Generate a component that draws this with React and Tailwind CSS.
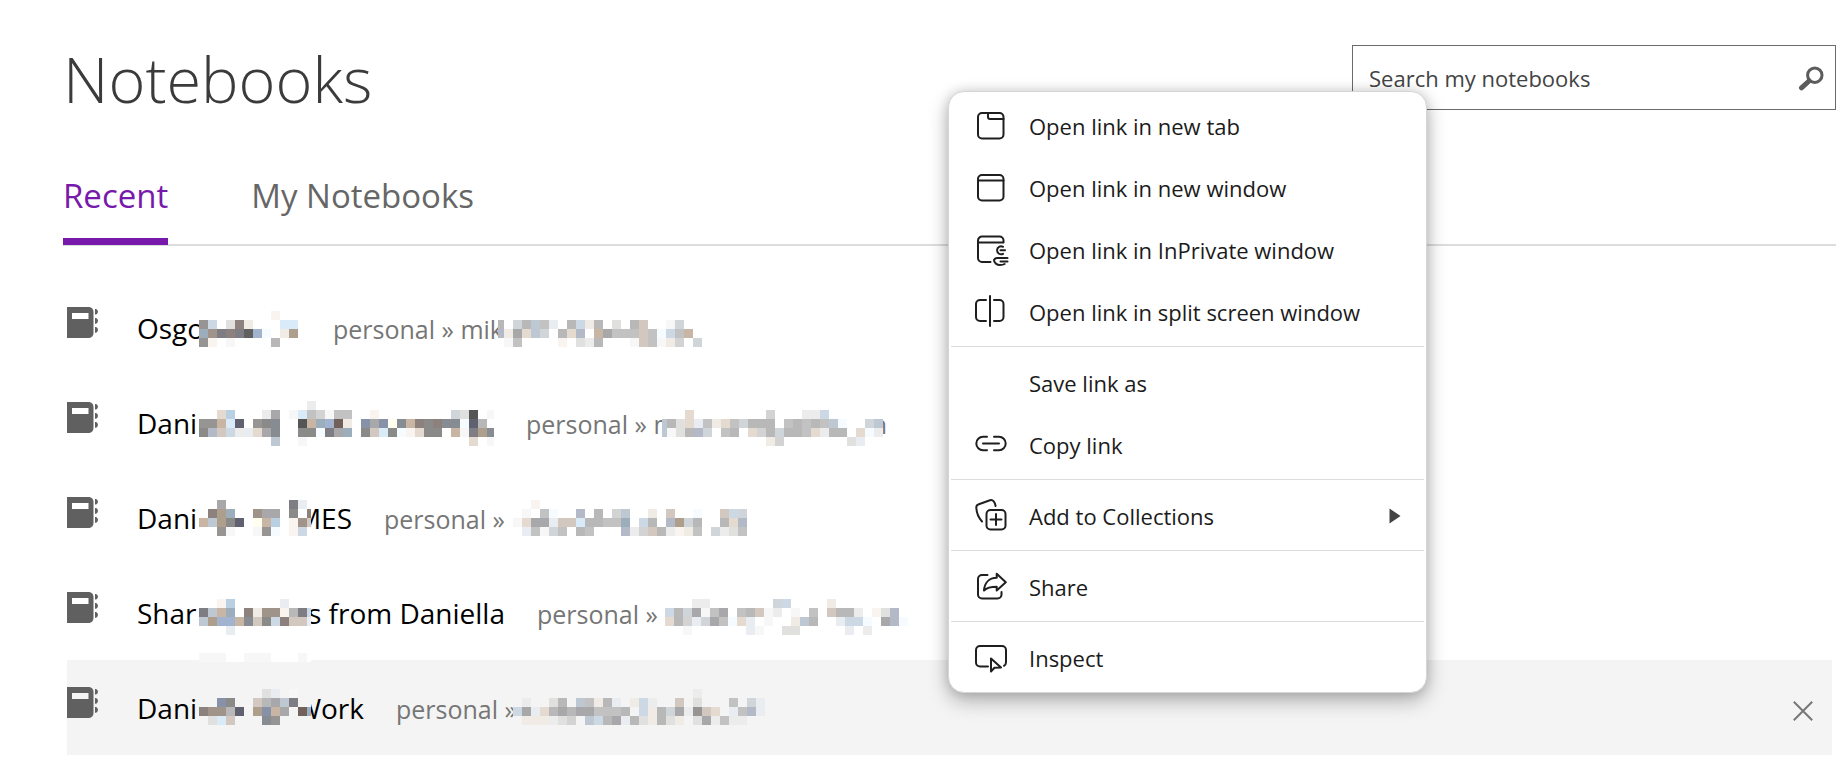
import React from "react";

const CELL = 9;
const ROW_HEIGHT = 95;

const PALETTE = {
  K: "#555555", a: "#606060", b: "#7d7d83", c: "#8a8a89", d: "#969594", e: "#a8a8aa",
  f: "#b8b8b8", g: "#c3c2c2", h: "#d3d3d3", i: "#e0e0df", j: "#ececec", k: "#f7f7f7", w: "#ffffff",
  B: "#a2b3cf", C: "#ccd8e4", D: "#d9ebf8", E: "#e9edf2", F: "#f5fbfe", G: "#bec8d3",
  H: "#9caebc", I: "#8792a8", L: "#cfd5d8", M: "#5f6070", N: "#878b92", O: "#b3b9c6", Y: "#b8d0e2",
  P: "#8c817c", Q: "#a0948a", R: "#c8b5a4", S: "#d3c8c0", T: "#e4dacf", U: "#f1ebe6", V: "#f9f4ef",
  W: "#ae9e8c", X: "#72605a", Z: "#fffff0",
};

const notebooks = [
  {
    prefix: "Osgo",
    nameMosaic: { y: 31, end: 12, rows: ["........V..", "dC.iPU...DD", "HQbPbaBF.UW", "dV.k....f.."] },
    path: "personal » mik",
    pathWidth: "w-[165px]",
    pathMosaic: { y: 40, cut: 3, rows: ["f.LfGgE.fCUf.i.fS..kL..", "OUeTGL.fTO.RegggSgFCgR.", ".kg....V.ijf...kSgkUh.L"] },
  },
  {
    prefix: "Dani",
    nameMosaic: {
      y: 26,
      end: 7,
      rows: [
        "............j",
        "..TY...je.kDghkgg..V........LiK.k",
        "ddRDM.dcN..KRHBXU.IeIZNRPcPNNFMf.",
        "cOSCjETeN..ccFbeH.cSDcFVTcc.RkbWN",
        "........G..k..................T.k",
      ],
    },
    path: "personal » m",
    pathWidth: "w-[136px]",
    pathMosaic: { y: 35, cut: 4, rows: ["...T........h...jjC", "GfiTEgUTgLfff.gfgfgGF..LG", "GkifOL.gf.ThfLffgTjff.TFj", "............Uh.......iE"] },
    pathTail: "n",
  },
  {
    prefix: "Dani",
    nameMosaic: { y: 30, end: 4, rows: ["..e.......bE.", ".PWH..Qee.c.P", "RGWcM.ZRY.VQS", "..dk..kdF.VC"] },
    suffix: "MES",
    suffixWidth: "w-[41px]",
    path: "personal »",
    pathWidth: "w-[129px]",
    pathMosaic: { y: 30, rows: ["..V", ".k.gF..O.f.hG..U.S..F..SCL", "kTeeESSDffggH.Cf.OWLf..fTO", ".EgkLg.fg...OjhSfjVUg.Ljig"] },
  },
  {
    prefix: "Shar",
    nameMosaic: { y: 34, end: 4, rows: ["..VY.....E", "bGRH.PUQQVfbC", "GWBBRNScCPSSE", "...E"] },
    suffix: "s from Daniella",
    suffixWidth: "w-[194px]",
    path: "personal »",
    pathWidth: "w-[128px]",
    pathMosaic: { y: 34, rows: ["...jj.......LC....U", "CfLekge.gfSkj.k.g.Sffj.ViO", "TfhELegFTE.k..UGf..ECCF.eOF", "..k......Ek..ii.....E.j"] },
  },
  {
    prefix: "Dani",
    nameMosaic: { y: -7, end: 4, rows: ["kkkwwkkkwwwkw", "", "", "", ".......iE.k", "..Ic..SfeGb", "PQQfM.WIRe.XH", ".iDS...Nd"] },
    suffix: "Work",
    suffixWidth: "w-[53px]",
    path: "personal »",
    pathWidth: "w-[117px]",
    pathMosaic: { y: 29, rows: ["....................j", ".j..if.GgUfE.UCj..S.i...g.LE", "CeETfefeegggf.CUfLejdST.EgOE", ".UUUjih.GCfeEfiUfiU.iejgjj"] },
    active: true,
  },
];

function Mosaic({ y, cut = 0, end = CELL, rows }) {
  const columns = Math.max(...rows.map((row) => row.length));
  const width = columns * CELL - cut - (CELL - end);
  return (
    <svg
      width={width}
      height={ROW_HEIGHT}
      viewBox={`${cut} 0 ${width} ${ROW_HEIGHT}`}
      shapeRendering="crispEdges"
      className="shrink-0"
      style={{ clipPath: "inset(-10px 0px)", overflow: "visible" }}
      aria-hidden="true"
    >
      {rows.flatMap((row, r) =>
        [...row].map((key, c) =>
          PALETTE[key] ? (
            <rect key={`${r}-${c}`} x={c * CELL} y={y + r * CELL} width={CELL} height={CELL} fill={PALETTE[key]} />
          ) : null
        )
      )}
    </svg>
  );
}

function NotebookIcon() {
  return (
    <svg width="31" height="31" viewBox="0 0 31 31" fill="#606060" className="shrink-0" aria-hidden="true">
      <path fillRule="evenodd" d="M0 0H22.5Q26.5 1 26.5 5V26Q26.5 30 22.5 31H0ZM5 6V12H21.5V6Z" />
      <path d="M28 2h1.2q1.8 1 1.8 2.8T29.2 7.6H28ZM28 11h1.2q1.8 1 1.8 2.8T29.2 16.8H28ZM28 20h1.2q1.8 1 1.8 2.8T29.2 25.8H28Z" />
    </svg>
  );
}

function MenuIcon({ children }) {
  return (
    <svg
      width="35"
      height="35"
      viewBox="0 0 35 35"
      fill="none"
      stroke="#1f1f1f"
      strokeWidth="2"
      strokeLinecap="round"
      strokeLinejoin="round"
      className="shrink-0 overflow-visible"
      aria-hidden="true"
    >
      {children}
    </svg>
  );
}

const icons = {
  tab: (
    <>
      <rect x="4" y="5" width="25.5" height="25.5" rx="4" />
      <path d="M14 5v4a2 2 0 0 0 2 2h13.5" />
    </>
  ),
  window: (
    <>
      <rect x="4" y="5" width="25.5" height="25.5" rx="4" />
      <path d="M4 10.5h25.5" />
    </>
  ),
  inPrivate: (
    <>
      <path d="M29.5 10.5V8.5a4 4 0 0 0-4-4H8a4 4 0 0 0-4 4V26a4 4 0 0 0 4 4h8.5M4 10.5h25.5" />
      <path d="M29 14.8a4 4 0 1 0 0 7M26.5 18.2h4.5M33.5 26H22.8a3.5 3.5 0 0 0-2.8 2c0 3 3 5 6 5 2 0 3.5-.3 4.600-1M26.5 29.5h7" />
    </>
  ),
  split: (
    <path d="M16 2v30M12 6H6a4 4 0 0 0-4 4v13a4 4 0 0 0 4 4h6M20 6h5.5a4 4 0 0 1 4 4v13a4 4 0 0 1-4 4H20" />
  ),
  copy: <path d="M13 9.8H9a6.7 6.7 0 0 0 0 13.4h4M20 9.8h5a6.7 6.7 0 0 1 0 13.4h-5M9 16.5h16" />,
  collections: (
    <>
      <rect x="12.5" y="12" width="19" height="19.5" rx="4" />
      <path d="M22 16v11M16.5 21.5h11M8 23.5C4 19 2.5 14 2.3 9.5c0-1.500 1-2.700 2.500-3.200L16 2.300c3-1 5 2 5.600 5.700" />
    </>
  ),
  share: (
    <>
      <path d="M13.5 6H8a4 4 0 0 0-4 4v15.500a4 4 0 0 0 4 4h15.500a4 4 0 0 0 4-4V23" />
      <path d="M22.7 4.7 31.8 13.3 22.7 21.5V17.8C17 17.8 13 18.5 10 21.5 10.5 14 15 9 22.7 8.800Z" />
    </>
  ),
  inspect: (
    <>
      <path d="M14 26.500H6a4 4 0 0 1-4-4V10a4 4 0 0 1 4-4h22a4 4 0 0 1 4 4v12.500a4 4 0 0 1-2 3.300" />
      <path d="M17 18.500v13l3.500-3.800 6.500-.2Z" />
    </>
  ),
};

const menuGroups = [
  [
    { label: "Open link in new tab", icon: "tab" },
    { label: "Open link in new window", icon: "window" },
    { label: "Open link in InPrivate window", icon: "inPrivate" },
    { label: "Open link in split screen window", icon: "split" },
  ],
  [{ label: "Save link as" }, { label: "Copy link", icon: "copy" }],
  [{ label: "Add to Collections", icon: "collections", submenu: true }],
  [{ label: "Share", icon: "share" }],
  [{ label: "Inspect", icon: "inspect" }],
];

function ContextMenu() {
  return (
    <div
      role="menu"
      className="absolute left-[948px] top-[91px] w-[479px] rounded-2xl border border-[#d6d6d6] bg-white px-0.5 shadow-[0_8px_20px_rgba(0,0,0,0.28),0_0_12px_rgba(0,0,0,0.14)]"
    >
      {menuGroups.map((group, index) => (
        <div
          key={index}
          role="group"
          className="flex flex-col gap-px border-b border-[#dcdcdc] pb-1 pt-[5px] first:pt-[3px] last:border-b-0"
        >
          {group.map((item) => (
            <button
              key={item.label}
              type="button"
              role="menuitem"
              className="flex h-[61px] w-full items-center gap-5 px-[23px] text-left text-[22px] leading-8 text-[#1b1b1b]"
            >
              <MenuIcon>{icons[item.icon]}</MenuIcon>
              <span className="grow whitespace-nowrap">{item.label}</span>
              {item.submenu && (
                <svg width="12" height="16" viewBox="0 0 12 16" fill="#444444" aria-hidden="true">
                  <path d="M0.5 0.5 11.5 8 0.5 15.5Z" />
                </svg>
              )}
            </button>
          ))}
        </div>
      ))}
    </div>
  );
}

function NotebookRow({ item }) {
  return (
    <li className={item.active ? "flex h-[95px] items-center bg-[#f4f4f4]" : "flex h-[95px] items-center"}>
      <a href="#notebook" className="flex h-[95px] grow items-center whitespace-nowrap">
        <span className="mr-[39px] self-center pb-2.5">
          <NotebookIcon />
        </span>
        <span className="mr-8 flex items-center text-[28px] leading-10 text-black">
          <span className="w-[62px] overflow-hidden">{item.prefix}</span>
          <Mosaic {...item.nameMosaic} />
          {item.suffix && (
            <span className={`${item.suffixWidth} flex justify-end overflow-hidden`}>
              <span>{item.suffix}</span>
            </span>
          )}
        </span>
        <span className="flex items-center text-[25px] leading-10 text-[#767676]">
          <span className={`${item.pathWidth} overflow-hidden pt-0.5`}>{item.path}</span>
          <Mosaic {...item.pathMosaic} />
          {item.pathTail && (
            <span className="flex w-1 justify-end overflow-hidden pt-0.5">
              <span>{item.pathTail}</span>
            </span>
          )}
        </span>
      </a>
      {item.active && (
        <button type="button" aria-label="Remove from list" className="mr-[19px] pt-1.5">
          <svg width="20" height="20" viewBox="0 0 20 20" stroke="#777777" strokeWidth="2" aria-hidden="true">
            <path d="M0.8 0.8 19.2 19.2M19.2 0.8 0.8 19.2" />
          </svg>
        </button>
      )}
    </li>
  );
}

export default function App() {
  return (
    <div className="relative min-h-screen bg-white pb-7 pl-[63px] pr-3 pt-[45px] font-['Open_Sans','Noto_Sans',sans-serif]">
      <header className="flex items-start justify-between">
        <h1 className="text-[63px] font-light leading-[67px] text-[#3b3b3b]">Notebooks</h1>
        <form role="search" className="flex h-[65px] w-[484px] items-center border border-[#6b6b6b] pl-4 pr-[11px]">
          <input
            type="text"
            aria-label="Search my notebooks"
            placeholder="Search my notebooks"
            className="min-w-0 grow bg-transparent text-[22px] leading-8 outline-none placeholder:text-[#444444]"
          />
          <button type="button" aria-label="Search" className="shrink-0 pt-0.5">
            <svg width="26" height="25" viewBox="0 0 26 25" fill="none" stroke="#5c5c5c" aria-hidden="true">
              <circle cx="16.8" cy="9.2" r="7.2" strokeWidth="3" />
              <path d="M11 15 3.500 21.800" strokeWidth="5" strokeLinecap="round" />
            </svg>
          </button>
        </form>
      </header>

      <nav className="mt-16 flex gap-[83px] border-b-2 border-[#dddddd] text-[33px] leading-10">
        <button type="button" className="-mb-px border-b-[7px] border-[#7719aa] pb-[22px] text-[#7719aa]">
          Recent
        </button>
        <button type="button" className="-mb-px border-b-[7px] border-transparent pb-[22px] text-[#666666]">
          My Notebooks
        </button>
      </nav>

      <ul className="ml-1 mr-1 mt-[34px]">
        {notebooks.map((item, index) => (
          <NotebookRow key={index} item={item} />
        ))}
      </ul>

      <ContextMenu />
    </div>
  );
}
